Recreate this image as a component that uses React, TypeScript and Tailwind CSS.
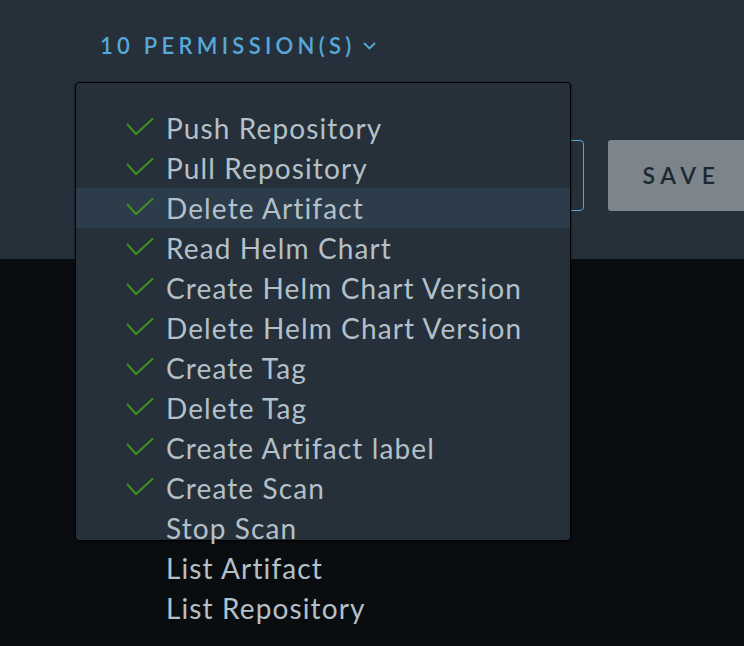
const permissions = [
  { label: "Push Repository", checked: true },
  { label: "Pull Repository", checked: true },
  { label: "Delete Artifact", checked: true, active: true },
  { label: "Read Helm Chart", checked: true },
  { label: "Create Helm Chart Version", checked: true },
  { label: "Delete Helm Chart Version", checked: true },
  { label: "Create Tag", checked: true },
  { label: "Delete Tag", checked: true },
  { label: "Create Artifact label", checked: true },
  { label: "Create Scan", checked: true },
  { label: "Stop Scan", checked: false },
  { label: "List Artifact", checked: false },
  { label: "List Repository", checked: false },
];

function Check() {
  return (
    <svg width="28" height="20" viewBox="0 0 28 20" fill="none" stroke="#3f8f22" strokeWidth="2">
      <polyline points="1,6 10,16 27,0.5" />
    </svg>
  );
}

function Chevron() {
  return (
    <svg width="13" height="8" viewBox="0 0 13 8" fill="none" stroke="#57a8d9" strokeWidth="1.8">
      <polyline points="1,1 6.5,6.5 12,1" />
    </svg>
  );
}

export default function App() {
  return (
    <div className="relative h-[646px] w-[744px] overflow-hidden bg-[#0a0d10] font-['Lato',sans-serif]">
      <div className="h-[259px] bg-[#25303a] pl-[100px] pt-[32px]">
        <button className="flex items-center gap-[7px] text-[22px] font-semibold uppercase leading-[28px] tracking-[0.195em] text-[#57a8d9]">
          10 Permission(s)
          <Chevron />
        </button>

        <div className="mt-[80px] flex items-center gap-[24px]">
          <div className="h-[71px] w-[484px] shrink-0 rounded-[4px] border border-[#57a8d9]" />
          <button className="h-[71px] w-[142px] shrink-0 rounded-[3px] bg-[#7c858c] pl-[5px] text-[23px] font-semibold uppercase tracking-[0.24em] text-[#1c2830]">
            Save
          </button>
        </div>
      </div>

      <div className="absolute left-[75px] top-[82px] h-[459px] w-[496px] rounded-[4px] border border-black bg-[#25303a] pt-[25px] shadow-[0_1px_3px_rgba(0,0,0,0.5)]">
        <ul>
          {permissions.map((p) => (
            <li
              key={p.label}
              className={`flex h-[40px] items-center text-[28px] leading-[40px] tracking-[0.04em] text-[#b4c0c8] ${
                p.active ? "bg-[#2c3c4a]" : ""
              }`}
            >
              <span className="flex w-[90px] shrink-0 justify-end pr-[12px]">
                {p.checked && <Check />}
              </span>
              <span className="whitespace-nowrap">{p.label}</span>
            </li>
          ))}
        </ul>
      </div>
    </div>
  );
}
